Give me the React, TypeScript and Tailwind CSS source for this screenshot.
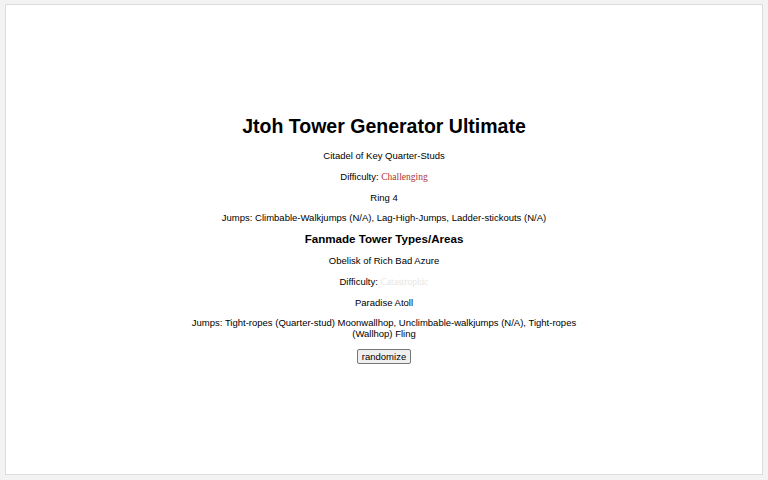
import React from "react";

const sans = { fontFamily: '"Liberation Sans", Arial, sans-serif' };
const serif = { fontFamily: '"Liberation Serif", "Times New Roman", serif' };

export default function App() {
  return (
    <div className="w-[768px] h-[480px] bg-[#f3f3f3] p-[4px_5px_5px_5px]" style={sans}>
      <div className="h-full bg-white border border-[#dcdcdc] flex flex-col items-center justify-center text-black">
        <div className="w-[400px] flex flex-col items-center text-center text-[9.5px] leading-[11px]">
          <h1 className="text-[19.5px] leading-[22px] font-bold mb-[13px]">Jtoh Tower Generator Ultimate</h1>
          <p>Citadel of Key Quarter-Studs</p>
          <p className="mt-[10px]">
            Difficulty: <span className="text-[#b03232]" style={serif}>Challenging</span>
          </p>
          <p className="mt-[9px]">Ring 4</p>
          <p className="mt-[9px]">Jumps: Climbable-Walkjumps (N/A), Lag-High-Jumps, Ladder-stickouts (N/A)</p>
          <h2 className="text-[11.6px] leading-[14px] font-bold mt-[9px]">Fanmade Tower Types/Areas</h2>
          <p className="mt-[9px]">Obelisk of Rich Bad Azure</p>
          <p className="mt-[10px]">
            Difficulty: <span className="text-[#e6e6e6]" style={serif}>Catastrophic</span>
          </p>
          <p className="mt-[9px]">Paradise Atoll</p>
          <p className="mt-[9px]">
            Jumps: Tight-ropes (Quarter-stud) Moonwallhop, Unclimbable-walkjumps (N/A), Tight-ropes (Wallhop) Fling
          </p>
          <button className="mt-[10px] px-[4px] h-[15px] text-[9.5px] leading-[13px] bg-[#efefef] border border-[#767676] rounded-[2px]">
            randomize
          </button>
        </div>
      </div>
    </div>
  );
}
